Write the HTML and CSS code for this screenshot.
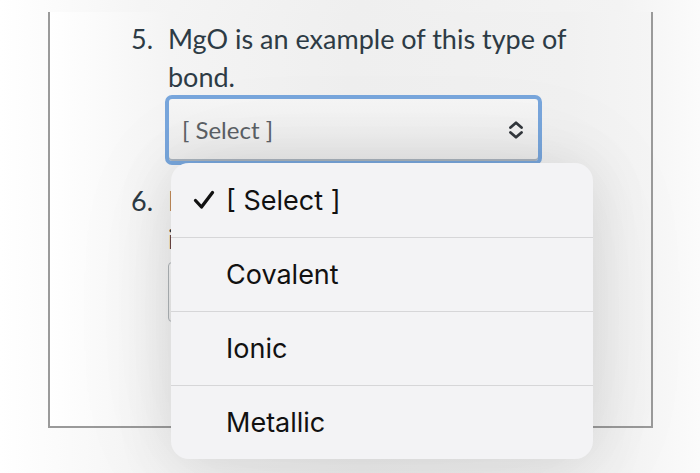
FILE: index.html
```html
<!DOCTYPE html>
<html>
<head>
<meta charset="utf-8">
<link rel="stylesheet" href="styles.css">
</head>
<body>
<div class="page">
  <div class="panel">
    <div class="question">
      <div class="num">5.</div>
      <div class="body">
        <p class="text">MgO is an example of this type of bond.</p>
        <div class="select focused">
          <span class="placeholder">[ Select ]</span>
          <svg class="updown" width="16" height="18" viewBox="0 0 16 18"><path d="M2.5 6.5 L8 1.8 L13.5 6.5 M2.5 11.5 L8 16.2 L13.5 11.5" fill="none" stroke="#33383d" stroke-width="2.8" stroke-linecap="round" stroke-linejoin="round"/></svg>
        </div>
      </div>
    </div>
    <div class="question second">
      <div class="num">6.</div>
      <div class="body">
        <p class="text">Identify the type of bond found in iron.</p>
        <div class="select plain">
          <span class="placeholder">[ Select ]</span>
        </div>
      </div>
    </div>
  </div>

  <div class="picker">
    <div class="option selected">
      <svg class="check" width="22" height="20" viewBox="0 0 22 20"><path d="M2.5 10.5 L8.5 17 L19.5 2.5" fill="none" stroke="#111" stroke-width="3.3" stroke-linecap="round" stroke-linejoin="round"/></svg>
      <span>[ Select ]</span>
    </div>
    <div class="option"><span>Covalent</span></div>
    <div class="option"><span>Ionic</span></div>
    <div class="option"><span>Metallic</span></div>
  </div>
</div>
</body>
</html>
```

FILE: styles.css
```css
html, body {
  margin: 0;
  padding: 0;
}
body {
  width: 700px;
  height: 473px;
  overflow: hidden;
  background: #fbfbfb;
  font-family: "Lato", "Liberation Sans", sans-serif;
}
.page {
  position: relative;
  width: 700px;
  height: 473px;
  box-sizing: border-box;
  padding: 12px 0 0 48px;
  background: linear-gradient(90deg, #ffffff 0px, #f5f5f5 140px, #efefef 360px, #f3f3f3 620px, #fbfbfb 700px);
}
.panel {
  width: 605px;
  height: 416px;
  border-left: 2px solid #9a9a9a;
  border-right: 2px solid #9a9a9a;
  border-bottom: 2px solid #9a9a9a;
  box-sizing: border-box;
  background: linear-gradient(90deg, #ffffff 0px, #f4f4f4 120px, #efefef 300px, #f1f1f1 520px, #f5f5f5 605px);
  padding: 8px 0 0 81px;
}
.question {
  display: flex;
  color: #2d3b45;
  font-size: 27px;
  line-height: 38px;
}
.num {
  flex: 0 0 37px;
}
.body {
  flex: 0 0 420px;
}
.text {
  margin: 0;
  width: 415px;
}
.question.second {
  margin-top: 17px;
}

.select {
  display: flex;
  align-items: center;
  justify-content: space-between;
  box-sizing: border-box;
  background: linear-gradient(180deg, #f6f6f6, #ececec);
  color: #5c6166;
  font-size: 24px;
}
.select.focused {
  margin: -1px 0 0 -3px;
  width: 377px;
  height: 70px;
  border: 4px solid #78a6dc;
  border-radius: 7px;
  padding: 0 14px 0 13px;
  box-shadow: inset 0 -2px 0 #a9b3bd;
}
.select.plain {
  margin: 4px 0 0 0;
  width: 371px;
  height: 60px;
  border: 1px solid #b0b5b9;
  border-radius: 4px;
  padding: 0 14px;
}

.picker {
  position: absolute;
  left: 171px;
  top: 163px;
  width: 422px;
  height: 296px;
  background: #f3f3f5;
  border-radius: 18px;
  box-shadow: 0 6px 60px rgba(0, 0, 0, 0.10), 0 0 120px rgba(0, 0, 0, 0.06);
  overflow: hidden;
  font-family: "Inter", "Roboto", sans-serif;
  color: #111;
}
.option {
  height: 74px;
  display: flex;
  align-items: center;
  padding-left: 55px;
  box-sizing: border-box;
  font-size: 27px;
  border-top: 1px solid #d6d6d8;
}
.option:first-child {
  border-top: none;
}
.option.selected {
  padding-left: 22px;
}
.check {
  margin-right: 11px;
}
```
